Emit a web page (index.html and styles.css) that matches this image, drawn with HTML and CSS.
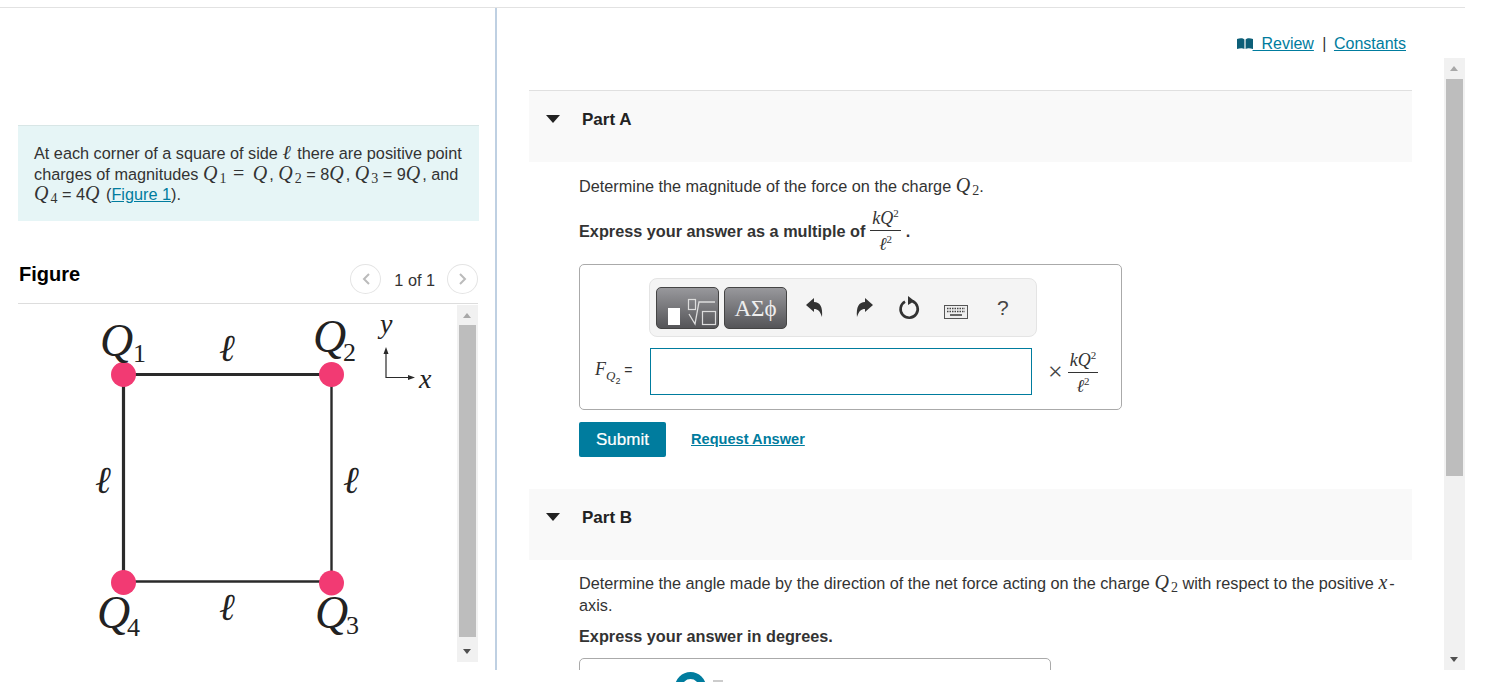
FILE: index.html
```html
<!DOCTYPE html>
<html lang="en">
<head>
    <meta charset="UTF-8">
    <title>Part A</title>
    <link rel="stylesheet" href="styles.css">
</head>
<body>
    <main class="page">

        <section class="left">
            <div class="intro">
                <p>At each corner of a square of side <i class="m">&#8467;</i> there are positive point charges of magnitudes <i class="m">Q</i><sub class="s">1</sub> <span class="m eq">=</span> <i class="m">Q</i>, <i class="m">Q</i><sub class="s">2</sub> = 8<i class="m">Q</i>, <i class="m">Q</i><sub class="s">3</sub> = 9<i class="m">Q</i>, and <i class="m">Q</i><sub class="s">4</sub> = 4<i class="m">Q</i> (<a href="#">Figure 1</a>).</p>
            </div>

            <div class="figure-head">
                <h2>Figure</h2>
                <div class="pager">
                    <span class="pager-btn">
                        <svg width="10" height="14" viewBox="0 0 10 14"><path d="M8 2 L3 7 L8 12" fill="none" stroke="#bbb" stroke-width="2"/></svg>
                    </span>
                    <span class="pager-text">1 of 1</span>
                    <span class="pager-btn">
                        <svg width="10" height="14" viewBox="0 0 10 14"><path d="M2 2 L7 7 L2 12" fill="none" stroke="#bbb" stroke-width="2"/></svg>
                    </span>
                </div>
            </div>

            <div class="figure-body">
                <svg class="diagram" width="439" height="358" viewBox="18 304 439 358">
                    <g stroke="#2a2a2a" fill="none">
                        <path d="M123.5 374.5 H331.5" stroke-width="3"/>
                        <path d="M123.5 374.5 V582.5" stroke-width="3.2"/>
                        <path d="M331.5 374.5 V582.5" stroke-width="2.4"/>
                        <path d="M123.5 581.5 H331.5" stroke-width="2.4"/>
                        <path d="M386 353 V377.5 H409" stroke-width="1.2"/>
                    </g>
                    <path d="M386 347 L383.5 354 H388.5 Z M415 377.5 L408 375 V380 Z" fill="#2a2a2a"/>
                    <g fill="#f23a73">
                        <circle cx="123.5" cy="374.5" r="12.5"/>
                        <circle cx="331.5" cy="374.5" r="12.5"/>
                        <circle cx="123.5" cy="582.5" r="12.5"/>
                        <circle cx="331.5" cy="583" r="12.5"/>
                    </g>
                    <g class="fig-text">
                        <text x="100" y="356" class="fig-q">Q</text><text x="133" y="362" class="fig-sub">1</text>
                        <text x="313" y="352" class="fig-q">Q</text><text x="343" y="361" class="fig-sub">2</text>
                        <text x="97" y="628" class="fig-q">Q</text><text x="127" y="636" class="fig-sub">4</text>
                        <text x="315" y="628" class="fig-q">Q</text><text x="346" y="634" class="fig-sub">3</text>
                        <text x="219" y="361" class="fig-l">&#8467;</text>
                        <text x="95" y="493" class="fig-l">&#8467;</text>
                        <text x="343" y="493" class="fig-l">&#8467;</text>
                        <text x="219" y="620" class="fig-l">&#8467;</text>
                        <text x="380" y="333" class="fig-axis">y</text>
                        <text x="419" y="388" class="fig-axis">x</text>
                    </g>
                </svg>
                <div class="scrollbar">
                    <span class="arrow-up"></span>
                    <span class="thumb thumb-fig"></span>
                    <span class="arrow-down"></span>
                </div>
            </div>
        </section>

        <section class="right">
            <div class="toplinks">
                <a href="#">
                    <svg width="16" height="12" viewBox="0 0 16 12"><path d="M0 1 C3 0 6 0 7.4 1.5 V11 C6 10 3 10 0 11 Z M16 1 C13 0 10 0 8.6 1.5 V11 C10 10 13 10 16 11 Z" fill="#0d5f78"/></svg>
                    &nbsp;Review</a>
                <span class="sep">|</span>
                <a href="#">Constants</a>
            </div>

            <div class="scrollrow">
                <div class="content">

                    <div class="part part-a">
                        <div class="part-head">
                            <span class="caret"></span>
                            <h3>Part A</h3>
                        </div>
                        <div class="part-body">
                            <p class="q">Determine the magnitude of the force on the charge <i class="m">Q</i><sub class="s">2</sub>.</p>
                            <p class="ask">Express your answer as a multiple of
                                <span class="frac">
                                    <span class="num"><i class="m">kQ</i><sup>2</sup></span>
                                    <span class="den"><i class="m">&#8467;</i><sup>2</sup></span>
                                </span>.
                            </p>

                            <div class="answer">
                                <div class="toolbar">
                                    <span class="tool-btn tool-tpl">
                                        <svg width="61" height="40" viewBox="0 0 61 40">
                                            <rect x="11" y="20" width="12" height="17" fill="#fff"/>
                                            <rect x="31.5" y="11.5" width="7" height="10" fill="none" stroke="#ddd" stroke-width="1.2"/>
                                            <path d="M32 26 L38 36 L42 14 H58" fill="none" stroke="#ddd" stroke-width="1.3"/>
                                            <rect x="45.5" y="23.5" width="13" height="13" fill="none" stroke="#ddd" stroke-width="1.2"/>
                                        </svg>
                                    </span>
                                    <span class="tool-btn tool-sym">&#913;&#931;&#981;</span>
                                    <svg class="tool-icon undo" width="18" height="20" viewBox="0 0 18 20"><path d="M0 7 L8 0 V4 C14 4 17 9 16 19 C14 13 12 11 8 11 V14 Z" fill="#333"/></svg>
                                    <svg class="tool-icon redo" width="18" height="20" viewBox="0 0 18 20"><path d="M18 7 L10 0 V4 C4 4 1 9 2 19 C4 13 6 11 10 11 V14 Z" fill="#333"/></svg>
                                    <svg class="tool-icon reset" width="22" height="24" viewBox="0 0 22 24"><path d="M14.5 5.2 A8.6 8.6 0 1 1 7 5.6" fill="none" stroke="#333" stroke-width="2.6"/><path d="M10 0 L16.5 5 L10 9 Z" fill="#333"/></svg>
                                    <svg class="tool-icon keys" width="24" height="14" viewBox="0 0 24 14"><rect x=".5" y=".5" width="23" height="13" fill="#eee" stroke="#555"/><path d="M3 3.5 H21 M3 6.5 H21" stroke="#444" stroke-width="1.6" stroke-dasharray="1.5 1"/><path d="M6 10 H18" stroke="#444" stroke-width="1.6"/></svg>
                                    <span class="tool-help">?</span>
                                </div>
                                <div class="answer-row">
                                    <span class="label"><i class="m big">F</i><sub class="lab-sub"><i class="m">Q</i><sub>2</sub></sub> =</span>
                                    <input class="answer-input" type="text">
                                    <span class="times">&#215;</span>
                                    <span class="frac">
                                        <span class="num"><i class="m">kQ</i><sup>2</sup></span>
                                        <span class="den"><i class="m">&#8467;</i><sup>2</sup></span>
                                    </span>
                                </div>
                            </div>

                            <div class="actions">
                                <button class="submit">Submit</button>
                                <a class="request" href="#">Request Answer</a>
                            </div>
                        </div>
                    </div>

                    <div class="part part-b">
                        <div class="part-head">
                            <span class="caret"></span>
                            <h3>Part B</h3>
                        </div>
                        <div class="part-body">
                            <p class="q">Determine the angle made by the direction of the net force acting on the charge <i class="m">Q</i><sub class="s">2</sub> with respect to the positive <i class="m">x</i>-axis.</p>
                            <p class="ask">Express your answer in degrees.</p>
                            <div class="answer"></div>
                        </div>
                    </div>

                </div>
                <div class="scrollbar scrollbar-main">
                    <span class="arrow-up"></span>
                    <span class="thumb thumb-main"></span>
                    <span class="arrow-down"></span>
                </div>
            </div>
        </section>

    </main>

    <span class="help-dot"></span>
    <span class="help-line"></span>
</body>
</html>
```

FILE: styles.css
```css
*{
    padding: 0;
    margin: 0;
    box-sizing: border-box;
}
html, body{
    height: 100%;
    overflow: hidden;
    background: white;
}
body{
    font-family: "Liberation Sans", Arial, sans-serif;
    font-size: 16.25px;
    color: #333;
}
a{
    color: #007c9e;
}
p{
    line-height: 20.5px;
}

.m{
    font-family: "Liberation Serif", "Times New Roman", serif;
    font-style: italic;
    font-size: 20px;
    line-height: 0;
    padding-right: 2px;
}
span.m{
    font-style: normal;
}
.eq{
    margin: 0 2px;
}
.s{
    font-family: "Liberation Serif", serif;
    font-size: 14px;
    line-height: 0;
    vertical-align: -3px;
}

.page{
    margin-top: 7px;
    width: 1465px;
    height: 663px;
    border-top: 1px solid #e2e2e2;
    display: flex;
}

/* left side */
.left{
    width: 497px;
    flex: none;
    padding-left: 18px;
    padding-top: 117px;
    border-right: 2px solid #bfd0e2;
    overflow: hidden;
}
.intro{
    width: 461px;
    height: 96px;
    background: #e6f5f6;
    border-top: 1px solid #d8e6e6;
    padding: 17px 16px 0 16px;
}
.figure-head{
    width: 460px;
    height: 83px;
    border-bottom: 1px solid #ddd;
    display: flex;
    justify-content: space-between;
    padding-top: 41px;
}
.figure-head h2{
    font-size: 20px;
    line-height: 24px;
    color: black;
    margin-left: 1px;
}
.pager{
    display: flex;
    align-items: flex-start;
    margin-top: 2px;
}
.pager-btn{
    width: 31px;
    height: 30px;
    border: 1px solid #e4e4e4;
    border-radius: 50%;
    display: flex;
    align-items: center;
    justify-content: center;
}
.pager-text{
    margin: 6px 12px 0 13px;
    line-height: 20px;
}
.figure-body{
    display: flex;
    align-items: flex-start;
}
.diagram{
    flex: none;
}
.fig-text text{
    font-family: "Liberation Serif", serif;
    fill: #222;
}
.fig-q{
    font-size: 46px;
    font-style: italic;
}
.fig-sub{
    font-size: 26px;
}
.fig-l{
    font-size: 38px;
    font-style: italic;
}
.fig-axis{
    font-size: 28px;
    font-style: italic;
}

/* scrollbars */
.scrollbar{
    width: 21px;
    height: 357px;
    margin-top: 1px;
    flex: none;
    background: #f1f1f1;
    position: relative;
    display: flex;
    flex-direction: column;
    align-items: center;
}
.thumb{
    width: 17px;
    background: #bdbdbd;
    flex: none;
}
.thumb-fig{
    height: 312px;
    margin-top: 20px;
}
.thumb-main{
    height: 397px;
    margin-top: 21px;
}
.arrow-up, .arrow-down{
    position: absolute;
    left: 6px;
    border-left: 4.5px solid transparent;
    border-right: 4.5px solid transparent;
}
.arrow-up{
    top: 8px;
    border-bottom: 5px solid #a8a8a8;
}
.arrow-down{
    bottom: 8px;
    border-top: 5px solid #505050;
}
.scrollbar-main{
    height: 612px;
    margin-top: 0;
}

/* right side */
.right{
    flex: 1;
    min-width: 0;
    display: flex;
    flex-direction: column;
}
.toplinks{
    height: 50px;
    padding-top: 26px;
    padding-right: 59px;
    text-align: right;
    font-size: 16px;
    line-height: 20px;
    flex: none;
}
.toplinks svg{
    vertical-align: -1px;
}
.sep{
    margin: 0 3px 0 4px;
}
.scrollrow{
    height: 612px;
    display: flex;
}
.content{
    flex: 1;
    min-width: 0;
    overflow: hidden;
    padding: 32px 32px 0 32px;
}

.part-head{
    height: 71px;
    background: #f9f9f9;
    display: flex;
    align-items: flex-start;
    padding: 19px 0 0 17px;
}
.part-a .part-head{
    height: 72px;
    border-top: 1px solid #e0e0e0;
}
.caret{
    width: 0;
    height: 0;
    margin-top: 5px;
    border-left: 7px solid transparent;
    border-right: 7px solid transparent;
    border-top: 8px solid #222;
}
.part-head h3{
    font-size: 17px;
    line-height: 20px;
    color: #222;
    margin-left: 22px;
}
.part-body{
    padding: 14px 14px 0 50px;
}
.part-a .q{
    line-height: 20px;
}
.part-b .part-body{
    padding-top: 12px;
}
.part-b .q{
    line-height: 22px;
}
.ask{
    font-weight: bold;
    display: flex;
    align-items: center;
    gap: 5px;
    white-space: nowrap;
}
.part-a .ask{
    margin-top: 12px;
    height: 46px;
}
.part-b .ask{
    margin-top: 10px;
}
.frac{
    display: inline-flex;
    flex-direction: column;
    align-items: center;
    font-weight: normal;
    line-height: 18px;
}
.frac .m{
    font-size: 18px;
    padding-right: 0;
}
.frac sup{
    font-family: "Liberation Serif", serif;
    font-size: 11px;
    line-height: 0;
    vertical-align: 7px;
}
.num{
    padding: 0 2px 3px 2px;
    border-bottom: 1px solid #333;
}
.den{
    padding-top: 4px;
}

.answer{
    width: 543px;
    height: 146px;
    margin-top: 10px;
    border: 1px solid #aaa;
    border-radius: 5px;
    padding: 13px 0 0 69px;
}
.part-b .answer{
    width: 472px;
    margin-top: 11px;
}
.toolbar{
    width: 388px;
    height: 59px;
    background: #f4f4f4;
    border: 1px solid #e4e4e4;
    border-radius: 8px;
    display: flex;
    align-items: center;
    padding-left: 6px;
}
.tool-btn{
    width: 63px;
    height: 42px;
    border: 1px solid #444;
    border-radius: 5px;
    background: linear-gradient(to bottom, #98989c, #555558);
    display: flex;
    align-items: center;
    justify-content: center;
    flex: none;
}
.tool-sym{
    margin-left: 5px;
    padding-top: 3px;
    font-family: "Liberation Serif", serif;
    font-size: 23px;
    line-height: 34px;
    color: #eee;
}
.tool-icon{
    flex: none;
}
.undo{
    margin-left: 19px;
}
.redo{
    margin-left: 31px;
}
.reset{
    margin-left: 25px;
}
.keys{
    margin-left: 24px;
    margin-top: 9px;
}
.tool-help{
    margin-left: 29px;
    font-size: 21px;
    color: #444;
}
.answer-row{
    display: flex;
    align-items: center;
    margin: 11px 0 0 -54px;
}
.answer-row .frac{
    margin-top: 2px;
}
.label{
    width: 55px;
    font-size: 14px;
    white-space: nowrap;
}
.label .big{
    font-size: 18px;
    padding-right: 0;
}
.lab-sub{
    font-size: 13px;
    line-height: 0;
    vertical-align: -5px;
}
.lab-sub .m{
    font-size: 13px;
    padding-right: 0;
}
.lab-sub sub{
    font-size: 9px;
    line-height: 0;
}
.answer-input{
    width: 382px;
    height: 47px;
    border: 1px solid #007c9e;
    outline: none;
    flex: none;
}
.times{
    font-family: "Liberation Serif", serif;
    font-size: 26px;
    color: #444;
    margin-left: 16px;
    margin-right: 5px;
}

.actions{
    display: flex;
    align-items: center;
    gap: 25px;
    margin-top: 12px;
}
.submit{
    width: 87px;
    height: 35px;
    background: #007c9e;
    border: none;
    border-radius: 2px;
    color: white;
    font-family: "Liberation Sans", Arial, sans-serif;
    font-size: 17px;
    -webkit-text-stroke: 0.2px white;
}
.request{
    font-size: 14.6px;
    font-weight: bold;
    margin-bottom: 2px;
}
.part-b{
    margin-top: 32px;
}

.help-dot{
    position: absolute;
    left: 675px;
    top: 672px;
    width: 31px;
    height: 31px;
    border-radius: 50%;
    border: 7px solid #007c9e;
}
.help-line{
    position: absolute;
    left: 713px;
    top: 680px;
    width: 10px;
    height: 2px;
    background: #ccc;
}
```
